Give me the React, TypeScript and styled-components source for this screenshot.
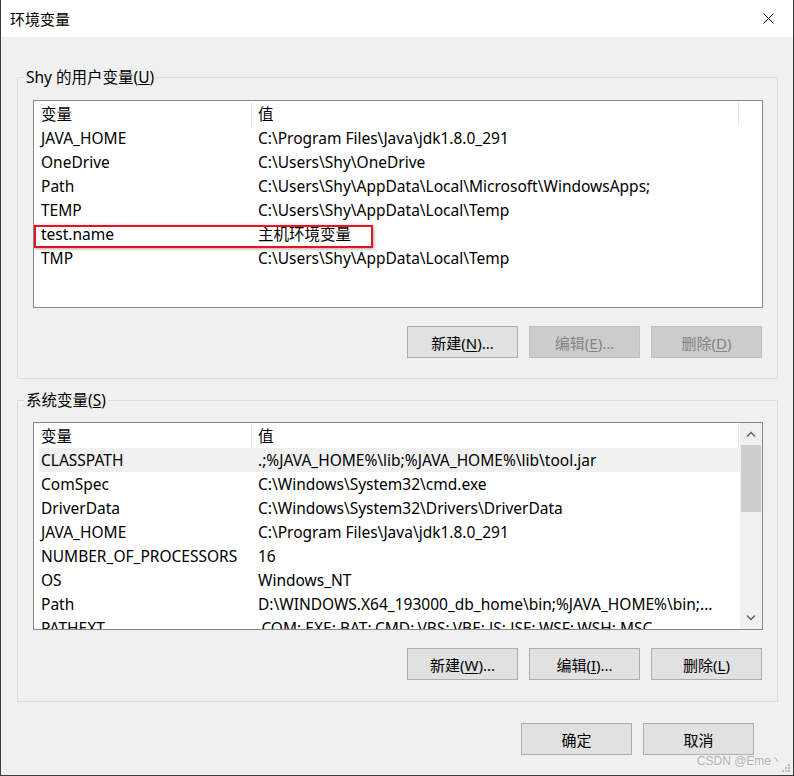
import React from "react";
import styled, {createGlobalStyle} from "styled-components";

type EnvVar = { name: string; value: string };

const userVars: EnvVar[] = [
    {name: "JAVA_HOME", value: "C:\\Program Files\\Java\\jdk1.8.0_291"},
    {name: "OneDrive", value: "C:\\Users\\Shy\\OneDrive"},
    {name: "Path", value: "C:\\Users\\Shy\\AppData\\Local\\Microsoft\\WindowsApps;"},
    {name: "TEMP", value: "C:\\Users\\Shy\\AppData\\Local\\Temp"},
    {name: "test.name", value: "主机环境变量"},
    {name: "TMP", value: "C:\\Users\\Shy\\AppData\\Local\\Temp"},
];

const systemVars: EnvVar[] = [
    {name: "CLASSPATH", value: ".;%JAVA_HOME%\\lib;%JAVA_HOME%\\lib\\tool.jar"},
    {name: "ComSpec", value: "C:\\Windows\\System32\\cmd.exe"},
    {name: "DriverData", value: "C:\\Windows\\System32\\Drivers\\DriverData"},
    {name: "JAVA_HOME", value: "C:\\Program Files\\Java\\jdk1.8.0_291"},
    {name: "NUMBER_OF_PROCESSORS", value: "16"},
    {name: "OS", value: "Windows_NT"},
    {name: "Path", value: "D:\\WINDOWS.X64_193000_db_home\\bin;%JAVA_HOME%\\bin;..."},
    {name: "PATHEXT", value: ".COM;.EXE;.BAT;.CMD;.VBS;.VBE;.JS;.JSE;.WSF;.WSH;.MSC"},
];

const uiFont = `"Noto Sans", "Noto Sans CJK SC", sans-serif`;

const GlobalStyle = createGlobalStyle`
  html, body {
    margin: 0;
    padding: 0;
    background: #f0f0f0;
  }
  * {
    box-sizing: border-box;
  }
  body {
    font-family: ${uiFont};
    font-size: 15px;
    color: #000;
  }
`;

function App() {
    return (
        <>
            <GlobalStyle/>
            <Window>
                <TitleBar>
                    <span>环境变量</span>
                    <CloseButton>
                        <svg width="11" height="11" viewBox="0 0 11 11">
                            <path d="M0.5 0.5 L10.5 10.5 M10.5 0.5 L0.5 10.5" stroke="#000" strokeWidth="1"/>
                        </svg>
                    </CloseButton>
                </TitleBar>
                <Body>
                    <Group>
                        <Legend>Shy 的用户变量(<u>U</u>)</Legend>
                        <ListView>
                            <ListMain>
                                <ListHeader/>
                                {userVars.map(v => <Row key={v.name} item={v}/>)}
                            </ListMain>
                            <Highlight/>
                        </ListView>
                        <ButtonRow>
                            <Button>新建(<u>N</u>)...</Button>
                            <Button disabled>编辑(<u>E</u>)...</Button>
                            <Button disabled>删除(<u>D</u>)</Button>
                        </ButtonRow>
                    </Group>
                    <Group $second>
                        <Legend>系统变量(<u>S</u>)</Legend>
                        <ListView>
                            <ListMain>
                                <ListHeader/>
                                {systemVars.map((v, i) => <Row key={v.name + i} item={v} selected={i === 0}/>)}
                            </ListMain>
                            <ScrollBar>
                                <ScrollArrow>
                                    <svg width="10" height="6" viewBox="0 0 10 6">
                                        <path d="M1 5.5 L5 1.5 L9 5.5" fill="none" stroke="#606060" strokeWidth="1.4"/>
                                    </svg>
                                </ScrollArrow>
                                <Thumb/>
                                <Track/>
                                <ScrollArrow>
                                    <svg width="10" height="6" viewBox="0 0 10 6">
                                        <path d="M1 0.5 L5 4.5 L9 0.5" fill="none" stroke="#606060" strokeWidth="1.4"/>
                                    </svg>
                                </ScrollArrow>
                            </ScrollBar>
                        </ListView>
                        <ButtonRow>
                            <Button>新建(<u>W</u>)...</Button>
                            <Button>编辑(<u>I</u>)...</Button>
                            <Button>删除(<u>L</u>)</Button>
                        </ButtonRow>
                    </Group>
                    <Footer>
                        <Button>确定</Button>
                        <Button>取消</Button>
                    </Footer>
                </Body>
                <Watermark>CSDN @Eme丶</Watermark>
                <Grip>
                    <svg width="8" height="8" viewBox="0 0 8 8">
                        {[[6, 0], [6, 3], [3, 3], [6, 6], [3, 6], [0, 6]].map(([x, y]) =>
                            <rect key={`${x}-${y}`} x={x} y={y} width="2" height="2" fill="#bcbcbc"/>)}
                    </svg>
                </Grip>
            </Window>
        </>
    );
}

function ListHeader() {
    return (
        <Header>
            <HeaderCell $width={218}>变量</HeaderCell>
            <HeaderCell $width={487}>值</HeaderCell>
        </Header>
    );
}

function Row({item, selected}: { item: EnvVar; selected?: boolean }) {
    return (
        <Item $selected={selected}>
            <NameCell>{item.name}</NameCell>
            <ValueCell>{item.value}</ValueCell>
        </Item>
    );
}

const Window = styled.div`
  position: relative;
  width: 794px;
  height: 776px;
  display: flex;
  flex-direction: column;
  border: 1px solid #3c3c3c;
  border-top: none;
  background: #f0f0f0;
  overflow: hidden;
`;
const TitleBar = styled.div`
  height: 37px;
  flex: none;
  display: flex;
  align-items: center;
  justify-content: space-between;
  padding: 0 0 0 9px;
  background: #fff;
  font-size: 15px;
`;
const CloseButton = styled.div`
  width: 46px;
  height: 37px;
  display: flex;
  align-items: center;
  justify-content: center;
  margin-right: 2px;
`;
const Body = styled.div`
  flex: 1;
  display: flex;
  flex-direction: column;
  padding: 30px 0 0 16px;
`;
const Group = styled.fieldset<{ $second?: boolean }>`
  width: 761px;
  min-width: 0;
  margin: ${p => p.$second ? "11px" : "0"} 0 0 0;
  padding: ${p => p.$second ? "12px 14px 21px 15px" : "13px 14px 20px 15px"};
  border: 1px solid #dcdcdc;
`;
const Legend = styled.legend`
  margin-left: -9px;
  padding: 0 2px;
  line-height: 20px;
  font-size: 15.5px;
  color: #000;
`;
const ListView = styled.div`
  position: relative;
  height: 208px;
  display: flex;
  border: 1px solid #828790;
  background: #fff;
  overflow: hidden;
`;
const ListMain = styled.div`
  flex: 1;
  min-width: 0;
`;
const Header = styled.div`
  display: flex;
  height: 25px;
  padding-top: 1px;
`;
const HeaderCell = styled.div<{ $width: number }>`
  width: ${p => p.$width}px;
  padding-left: 7px;
  line-height: 25px;
  font-size: 15.5px;
  border-right: 1px solid #e5e5e5;
  &:nth-child(2) {
    padding-left: 6px;
  }
`;
const Item = styled.div<{ $selected?: boolean }>`
  display: grid;
  grid-template-columns: 213px 1fr;
  height: 24px;
  padding-left: 5px;
  line-height: 24px;
  font-size: 15.5px;
  white-space: nowrap;
  background: ${p => p.$selected ? "#f0f0f0" : "transparent"};
  background-clip: content-box;
`;
const NameCell = styled.div`
  padding-left: 2px;
  overflow: hidden;
`;
const ValueCell = styled.div`
  padding-left: 6px;
  overflow: hidden;
`;
const Highlight = styled.div`
  position: absolute;
  left: 0;
  top: 124px;
  width: 339px;
  height: 23px;
  border: 2px solid #e8131f;
  box-shadow: 1px 1px 3px rgba(0, 0, 0, 0.35);
  pointer-events: none;
`;
const ScrollBar = styled.div`
  width: 22px;
  flex: none;
  display: flex;
  flex-direction: column;
  background: #f0f0f0;
`;
const ScrollArrow = styled.div`
  height: 22px;
  display: flex;
  align-items: center;
  justify-content: center;
`;
const Thumb = styled.div`
  height: 67px;
  margin: 0 1px;
  background: #cdcdcd;
`;
const Track = styled.div`
  flex: 1;
`;
const ButtonRow = styled.div`
  display: flex;
  justify-content: flex-end;
  gap: 11px;
  margin-top: 18px;
  padding-right: 1px;
`;
const Button = styled.button`
  width: 111px;
  height: 32px;
  padding: 0;
  font-family: ${uiFont};
  font-size: 15px;
  color: #000;
  background: #e1e1e1;
  border: 1px solid #adadad;
  &:disabled {
    color: #838383;
    background: #cccccc;
    border-color: #bfbfbf;
  }
  u {
    text-underline-offset: 2px;
  }
`;
const Footer = styled.div`
  display: flex;
  justify-content: flex-end;
  gap: 11px;
  margin-top: 21px;
  padding-right: 39px;
`;
const Watermark = styled.div`
  position: absolute;
  right: 10px;
  bottom: 5px;
  font-family: "Liberation Sans", sans-serif;
  font-size: 12px;
  color: #b0b0b0;
  text-shadow: 0 0 2px #fff;
`;
const Grip = styled.div`
  position: absolute;
  right: 3px;
  bottom: 3px;
  width: 8px;
  height: 8px;
  line-height: 0;
`;

export default App;
